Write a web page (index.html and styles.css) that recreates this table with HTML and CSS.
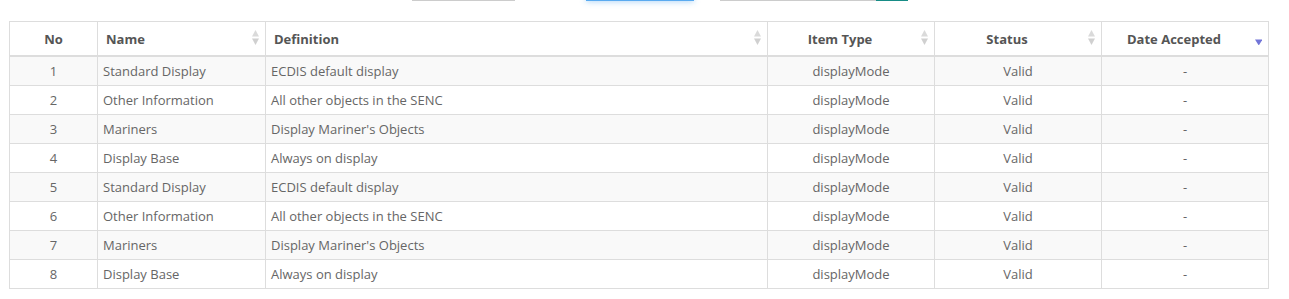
FILE: index.html
```html
<!DOCTYPE html>
<html>
<head>
<meta charset="utf-8">
<link rel="stylesheet" href="styles.css">
</head>
<body>
<div class="toolbar">
  <div class="ctl ctl-input1"></div>
  <div class="ctl ctl-btn"></div>
  <div class="search">
    <div class="ctl ctl-input2"></div>
    <div class="ctl ctl-go"></div>
  </div>
</div>
<div class="wrap">
<table class="grid">
  <thead>
    <tr>
      <th class="c-no"><div class="th-inner center"><span class="lbl">No</span></div></th>
      <th class="c-name"><div class="th-inner"><span class="lbl left">Name</span><svg class="sort" width="7" height="15" viewBox="0 0 7 15"><polygon points="3.5,0 7,6.5 0,6.5" fill="#dadada"/><polygon points="0,8.5 7,8.5 3.5,15" fill="#d0d0d0"/></svg></div></th>
      <th class="c-def"><div class="th-inner"><span class="lbl left">Definition</span><svg class="sort" width="7" height="15" viewBox="0 0 7 15"><polygon points="3.5,0 7,6.5 0,6.5" fill="#dadada"/><polygon points="0,8.5 7,8.5 3.5,15" fill="#d0d0d0"/></svg></div></th>
      <th class="c-type"><div class="th-inner"><span class="lbl mid">Item Type</span><svg class="sort" width="7" height="15" viewBox="0 0 7 15"><polygon points="3.5,0 7,6.5 0,6.5" fill="#dadada"/><polygon points="0,8.5 7,8.5 3.5,15" fill="#d0d0d0"/></svg></div></th>
      <th class="c-status"><div class="th-inner"><span class="lbl mid">Status</span><svg class="sort" width="7" height="15" viewBox="0 0 7 15"><polygon points="3.5,0 7,6.5 0,6.5" fill="#dadada"/><polygon points="0,8.5 7,8.5 3.5,15" fill="#d0d0d0"/></svg></div></th>
      <th class="c-date"><div class="th-inner"><span class="lbl mid">Date Accepted</span><svg class="sort" width="7" height="15" viewBox="0 0 7 15"><polygon points="0,9.5 7.5,9.5 3.75,15.5" fill="#7275d8"/></svg></div></th>
    </tr>
  </thead>
  <tbody>
    <tr class="odd"><td class="center">1</td><td>Standard Display</td><td>ECDIS default display</td><td class="center">displayMode</td><td class="center">Valid</td><td class="center">-</td></tr>
    <tr><td class="center">2</td><td>Other Information</td><td>All other objects in the SENC</td><td class="center">displayMode</td><td class="center">Valid</td><td class="center">-</td></tr>
    <tr class="odd"><td class="center">3</td><td>Mariners</td><td>Display Mariner's Objects</td><td class="center">displayMode</td><td class="center">Valid</td><td class="center">-</td></tr>
    <tr><td class="center">4</td><td>Display Base</td><td>Always on display</td><td class="center">displayMode</td><td class="center">Valid</td><td class="center">-</td></tr>
    <tr class="odd"><td class="center">5</td><td>Standard Display</td><td>ECDIS default display</td><td class="center">displayMode</td><td class="center">Valid</td><td class="center">-</td></tr>
    <tr><td class="center">6</td><td>Other Information</td><td>All other objects in the SENC</td><td class="center">displayMode</td><td class="center">Valid</td><td class="center">-</td></tr>
    <tr class="odd"><td class="center">7</td><td>Mariners</td><td>Display Mariner's Objects</td><td class="center">displayMode</td><td class="center">Valid</td><td class="center">-</td></tr>
    <tr><td class="center">8</td><td>Display Base</td><td>Always on display</td><td class="center">displayMode</td><td class="center">Valid</td><td class="center">-</td></tr>
  </tbody>
</table>
</div>
</body>
</html>
```

FILE: styles.css
```css
html, body {
  margin: 0;
  padding: 0;
  background: #ffffff;
}
body {
  font-family: "Open Sans", "Liberation Sans", sans-serif;
  font-size: 13px;
  color: #666666;
  overflow: hidden;
}
.toolbar {
  display: flex;
  align-items: flex-end;
  height: 31px;
  margin-top: -30px;
  padding-left: 412px;
}
.ctl {
  height: 31px;
  box-sizing: border-box;
  background: #ffffff;
}
.ctl-input1 {
  width: 103px;
  border-bottom: 1px solid #cccccc;
}
.ctl-btn {
  width: 108px;
  margin-left: 71px;
  border-bottom: 2px solid #5aaaf0;
  box-shadow: 0 1px 6px rgba(90, 170, 240, 0.45);
}
.search {
  display: flex;
  margin-left: 26px;
}
.ctl-input2 {
  width: 156px;
  border-bottom: 1px solid #cccccc;
}
.ctl-go {
  width: 32px;
  background: #178c86;
}
.wrap {
  padding: 20px 0 0 9px;
}
.grid {
  border-collapse: separate;
  border-spacing: 0;
  table-layout: fixed;
  width: 1260px;
}
.grid th, .grid td {
  box-sizing: border-box;
  border-left: 1px solid #dddddd;
  border-bottom: 1px solid #dddddd;
}
.grid th:last-child, .grid td:last-child {
  border-right: 1px solid #dddddd;
}
.grid th {
  border-top: 1px solid #dddddd;
  border-bottom: 2px solid #dddddd;
  height: 36px;
  padding: 0;
  font-weight: 700;
  color: #555555;
  font-size: 13px;
}
.c-no { width: 88px; }
.c-name { width: 168px; }
.c-def { width: 502px; }
.c-type { width: 167px; }
.c-status { width: 167px; }
.c-date { width: 168px; }
.th-inner {
  display: flex;
  align-items: center;
  padding: 0 6px 0 8px;
}
.th-inner.center {
  padding: 0;
  justify-content: center;
}
.lbl { flex: 1; }
.lbl.left { text-align: left; }
.lbl.mid {
  text-align: center;
  padding-left: 2px;
  margin-right: 19px;
}
.th-inner.center .lbl { text-align: center; }
.sort {
  display: block;
  flex: none;
  margin-bottom: 3px;
}
.grid td {
  height: 29px;
  padding: 0 5px;
  white-space: nowrap;
  vertical-align: middle;
}
.grid td.center { text-align: center; }
.grid tr.odd td { background: #f9f9f9; }
```
